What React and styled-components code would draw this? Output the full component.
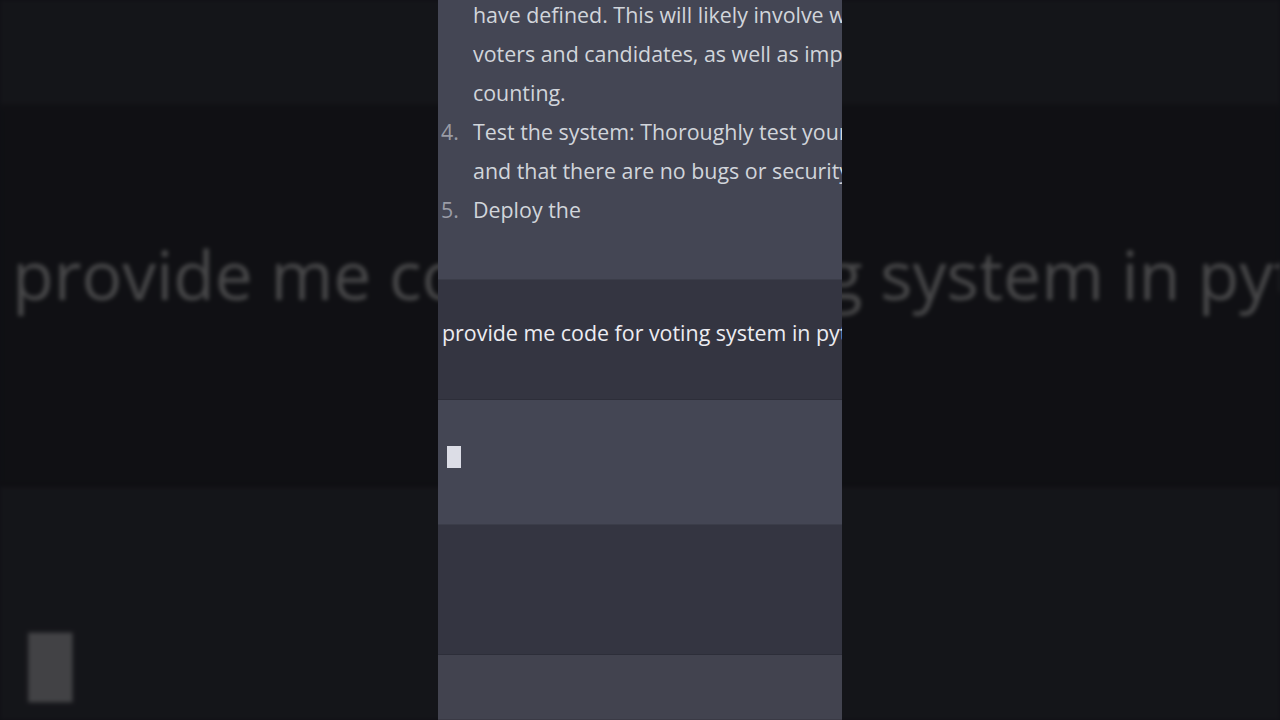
import React from 'react';
import styled, { createGlobalStyle } from 'styled-components';

const GlobalStyle = createGlobalStyle`
  html, body {
    margin: 0;
    padding: 0;
    background: #0e0f14;
    overflow: hidden;
  }
`;

// The whole frame: a blurred, zoomed copy of the chat behind the sharp one
const Stage = styled.div`
  width: 100vw;
  height: 100vh;
  display: grid;
  overflow: hidden;
  background: #0e0f14;
`;

const Backdrop = styled.div`
  grid-area: 1 / 1;
  display: grid;
  place-items: center;
  overflow: hidden;
  filter: blur(2px) brightness(0.3);
`;

const Zoomed = styled.div`
  width: 404px;
  height: 720px;
  overflow: hidden;
  transform: scale(3.17);
  transform-origin: center center;
`;

const Frame = styled.div`
  grid-area: 1 / 1;
  justify-self: center;
  position: relative;
  z-index: 1;
  width: 404px;
  height: 720px;
  overflow: hidden;
`;

// Chat itself
const Chat = styled.div`
  display: flex;
  flex-direction: column;
  height: 100%;
  font-family: 'Open Sans', 'Noto Sans', sans-serif;
  font-size: 21.4px;
  line-height: 39px;
`;

const Band = styled.div`
  flex: ${(p) => (p.$grow ? '1' : 'none')};
  height: ${(p) => (p.$height ? `${p.$height}px` : 'auto')};
  background: ${(p) => p.$bg};
  border-bottom: 1px solid rgba(0, 0, 0, 0.12);
  box-sizing: border-box;
  overflow: hidden;
`;

const List = styled.div`
  margin-top: -5px;
  display: flex;
  flex-direction: column;
`;

const Item = styled.div`
  display: grid;
  grid-template-columns: 35px 1fr;
  color: #d1d5db;
`;

const Marker = styled.span`
  padding-left: 3px;
  color: #9a9ca6;
`;

const Body = styled.span`
  white-space: nowrap;
`;

const Prompt = styled.div`
  padding: 33px 0 0 4px;
  color: #ececf1;
  white-space: nowrap;
`;

const Cursor = styled.span`
  display: block;
  margin: 46px 0 0 9px;
  width: 14px;
  height: 22px;
  background: #dcdde6;
`;

const items = [
  {
    marker: '',
    lines: [
      'have defined. This will likely involve writing code to store and manage',
      'voters and candidates, as well as implementing the logic for voting and vote',
      'counting.',
    ],
  },
  {
    marker: '4.',
    lines: [
      'Test the system: Thoroughly test your voting system to ensure that it works correctly',
      'and that there are no bugs or security vulnerabilities.',
    ],
  },
  { marker: '5.', lines: ['Deploy the'] },
];

const Conversation = () => (
  <Chat>
    <Band $bg='#444654' $height={280}>
      <List>
        {items.map((item, i) => (
          <Item key={i}>
            <Marker>{item.marker}</Marker>
            <Body>
              {item.lines.map((line, j) => (
                <React.Fragment key={j}>
                  {j > 0 && <br />}
                  {line}
                </React.Fragment>
              ))}
            </Body>
          </Item>
        ))}
      </List>
    </Band>
    <Band $bg='#343541' $height={120}>
      <Prompt>provide me code for voting system in python</Prompt>
    </Band>
    <Band $bg='#444654' $height={125}>
      <Cursor />
    </Band>
    <Band $bg='#343541' $height={130} />
    <Band $bg='#42434f' $grow />
  </Chat>
);

const App = () => {
  return (
    <>
      <GlobalStyle />
      <Stage>
        <Backdrop aria-hidden='true'>
          <Zoomed>
            <Conversation />
          </Zoomed>
        </Backdrop>
        <Frame>
          <Conversation />
        </Frame>
      </Stage>
    </>
  );
};

export default App;
